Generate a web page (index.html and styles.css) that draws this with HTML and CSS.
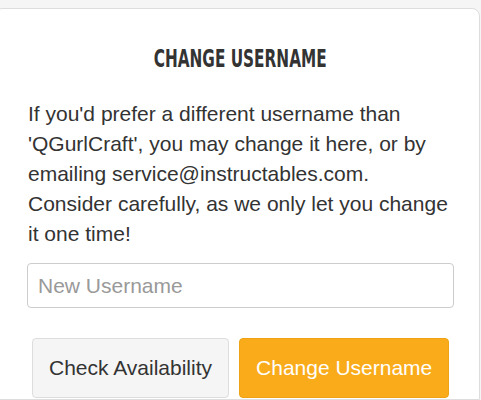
FILE: index.html
```html
<!DOCTYPE html>
<html lang="en">
<head>
    <meta charset="UTF-8">
    <meta name="viewport" content="width=device-width, initial-scale=1.0">
    <title>Change Username</title>
    <link rel="stylesheet" href="styles.css">
</head>
<body>
    <div class="modal">
        <h2><span>Change Username</span></h2>
        <p>If you'd prefer a different username than 'QGurlCraft', you may change it here, or by emailing service@instructables.com. Consider carefully, as we only let you change it one time!</p>
        <input type="text" class="field" placeholder="New Username">
        <div class="actions">
            <button class="btn btn-default">Check Availability</button>
            <button class="btn btn-primary">Change Username</button>
        </div>
    </div>
</body>
</html>
```

FILE: styles.css
```css
body {
    margin: 0;
    background-color: #f5f5f5;
    font-family: "Liberation Sans", Arial, sans-serif;
    color: #333;
}
.modal {
    margin: 8px 1px 0 -6px;
    padding: 30px 25px 0 32px;
    background-color: #fff;
    border: 1px solid #ddd;
    border-radius: 8px 8px 0 0;
    height: 360px;
}
.modal h2 {
    margin: 0 0 20px;
    text-align: center;
    font-family: "DejaVu Sans Condensed", "DejaVu Sans", sans-serif;
    font-weight: bold;
    font-size: 25px;
    line-height: 40px;
    text-transform: uppercase;
    color: #333;
}
.modal h2 span {
    display: inline-block;
    transform: scaleX(0.68);
}
.modal p {
    margin: 0 0 14px;
    padding-left: 1px;
    font-size: 21px;
    line-height: 30px;
}
.field {
    display: block;
    box-sizing: border-box;
    width: 100%;
    height: 45px;
    padding: 0 10px;
    font-family: inherit;
    font-size: 21px;
    color: #333;
    border: 1px solid #ccc;
    border-radius: 4px;
}
.field::placeholder {
    color: #999;
}
.actions {
    display: flex;
    gap: 10px;
    margin-top: 30px;
    margin-left: 5px;
}
.btn {
    font-family: inherit;
    font-size: 21px;
    white-space: nowrap;
    padding: 17px 16px;
    border-radius: 4px;
    border: 1px solid #ddd;
}
.btn-default {
    background-color: #f5f5f5;
    color: #333;
}
.btn-primary {
    background-color: #f9ab1a;
    border-color: #eea214;
    color: #fff;
}
```
